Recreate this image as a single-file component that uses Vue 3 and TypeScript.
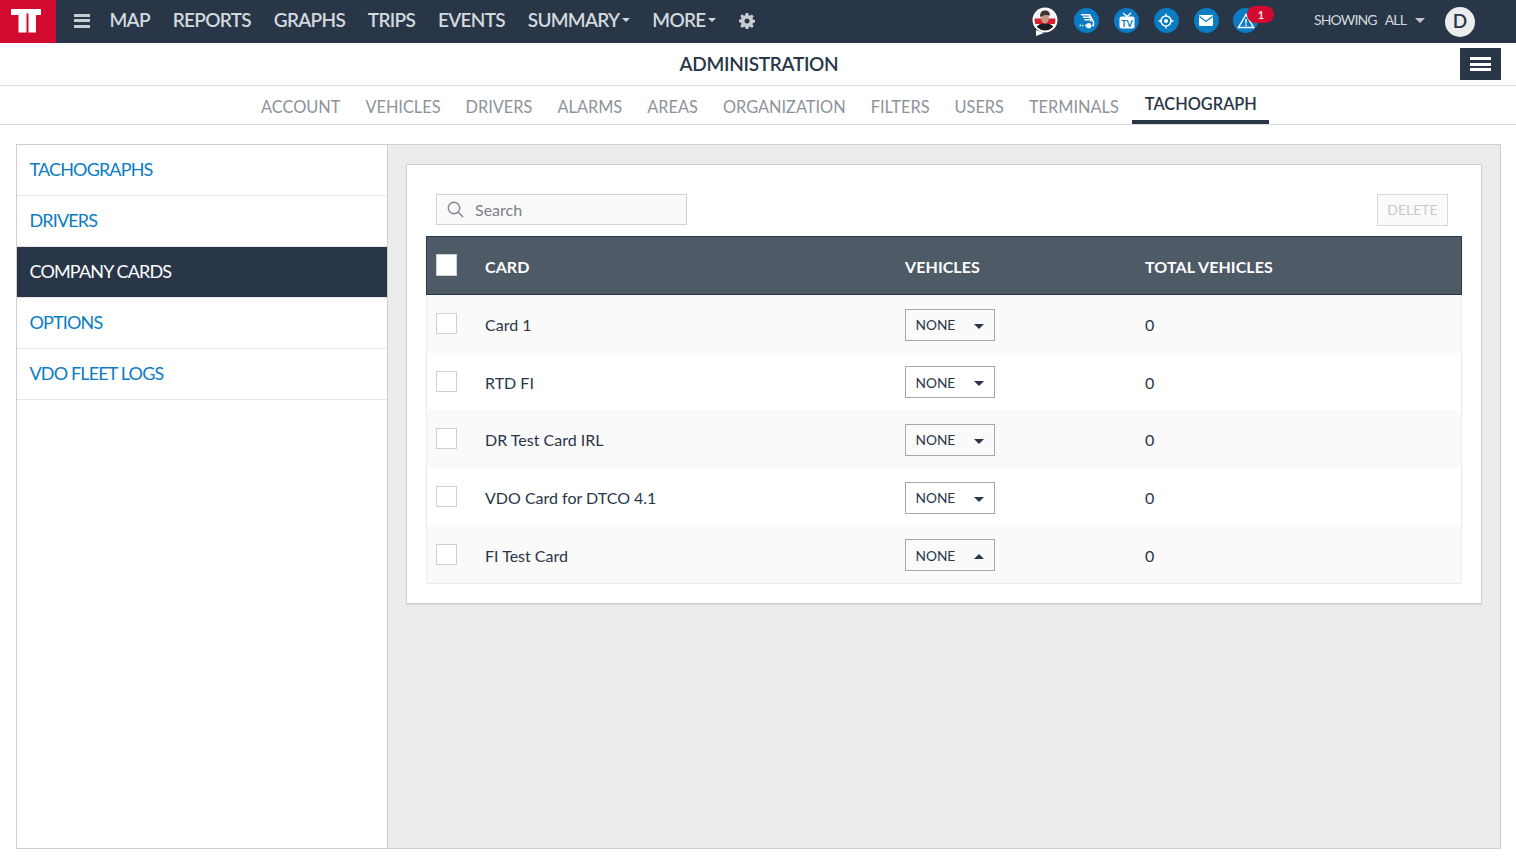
<template>
  <div class="page">
    <nav class="topbar">
      <div class="logo">
        <svg width="30" height="24" viewBox="0 0 30 24"><path d="M0 0h30v6h-5v17.500h-7.500V4.500h-2V23.500H7.500V6H0z" fill="#fff" /></svg>
      </div>
      <div class="burger"><i></i><i></i><i></i></div>
      <ul class="main-menu">
        <li v-for="item in menu" :key="item.label" :class="{ caret: item.caret }">{{ item.label }}</li>
        <li class="gear">
          <svg width="16" height="16" viewBox="0 0 16 16"><path fill="#c9ced4" fill-rule="evenodd" d="M6.700 0h2.600l.4 2.200 1.300.6 1.900-1.300 1.800 1.800-1.300 1.900.6 1.300 2 .4v2.600l-2 .4-.6 1.300 1.300 1.900-1.800 1.800-1.900-1.300-1.300.6-.4 2H6.700l-.4-2-1.300-.6-1.900 1.300-1.800-1.800L2.600 11 2 9.700 0 9.300V6.700l2-.4.600-1.300-1.300-1.900 1.800-1.800L5 2.800l1.300-.6zM8 5.500a2.500 2.500 0 1 0 0 5 2.500 2.500 0 0 0 0-5z" /></svg>
        </li>
      </ul>
      <div class="status-icons">
        <span class="avatar-bubble">
          <svg width="27" height="29" viewBox="0 0 27 29">
            <path d="M4 23l0 6 8-3z" fill="#fff" />
            <circle cx="13" cy="13" r="12.500" fill="#fff" />
            <clipPath id="face"><circle cx="13" cy="13" r="10.500" /></clipPath>
            <g clip-path="url(#face)">
              <rect x="2" y="2" width="22" height="22" fill="#f4f4f4" />
              <rect x="2" y="11.500" width="22" height="5.500" fill="#d8202f" />
              <path d="M3 24c1-6 5-7.500 10-7.500s9 1.500 10 7.500z" fill="#1d1d22" />
              <ellipse cx="13" cy="11" rx="4" ry="5.500" fill="#c99582" />
              <path d="M8 10c0-5 2-6.500 5-6.500s5 1.500 5 5c-3-1-6-1-10 1.500z" fill="#3a3432" />
            </g>
          </svg>
        </span>
        <span class="round">
          <svg width="18" height="18" viewBox="0 0 18 18" fill="none" stroke="#fff" stroke-width="1.400">
            <path d="M3 2.700h8.500L15.500 10v3.500H14M8.500 13.500H7M5 5.200h6.500M6.500 7.700h5M11.500 2.700L13 9.500" />
            <path d="M1.500 13.500h4" stroke-dasharray="1.700 1" />
            <circle cx="10.800" cy="13.700" r="1.900" fill="#fff" />
          </svg>
        </span>
        <span class="round">
          <svg width="18" height="18" viewBox="0 0 18 18">
            <path d="M5 1l4 3.500L13 1" fill="none" stroke="#fff" stroke-width="1.500" />
            <rect x="1.500" y="4.500" width="15" height="12" rx="2" fill="#fff" />
            <text x="9" y="14.500" class="tv-text">TV</text>
          </svg>
        </span>
        <span class="round">
          <svg width="18" height="18" viewBox="0 0 18 18" fill="none" stroke="#fff">
            <circle cx="9" cy="9" r="5" stroke-width="1.600" />
            <circle cx="9" cy="9" r="2" fill="#fff" stroke="none" />
            <path d="M9 1.500v2.500M9 14v2.500M1.500 9H4M14 9h2.500" stroke-width="1.300" />
          </svg>
        </span>
        <span class="round">
          <svg width="14" height="11" viewBox="0 0 14 11">
            <rect width="14" height="11" rx="1" fill="#fff" />
            <path d="M.5 1.500L7 6.500l6.500-5" fill="none" stroke="#0a7cc4" stroke-width="1.200" />
          </svg>
        </span>
        <span class="round alert">
          <svg width="18" height="16" viewBox="0 0 18 16">
            <path d="M9 1.500L1.500 14.500h15z" fill="none" stroke="#fff" stroke-width="1.500" />
            <path d="M9 6v4.500M9 11.500v1.500" stroke="#fff" stroke-width="1.500" />
          </svg>
          <b class="badge">1</b>
        </span>
      </div>
      <div class="showing">
        <span>SHOWING</span><span>ALL</span><i class="down light"></i>
      </div>
      <div class="user">D</div>
    </nav>

    <header class="title-bar">
      <h1>ADMINISTRATION</h1>
      <button class="list-btn"><i></i><i></i><i></i></button>
    </header>

    <div class="tabs">
      <a v-for="tab in tabs" :key="tab" :class="{ active: tab === 'TACHOGRAPH' }">{{ tab }}</a>
    </div>

    <main class="content">
      <aside class="side">
        <a v-for="link in sideLinks" :key="link" :class="{ active: link === 'COMPANY CARDS' }">{{ link }}</a>
      </aside>
      <section class="panel">
        <div class="card">
          <div class="tools">
            <div class="search">
              <svg width="17" height="17" viewBox="0 0 17 17" fill="none" stroke="#7f8790" stroke-width="1.400">
                <circle cx="7" cy="7" r="5.700" />
                <path d="M11 11L16 16" />
              </svg>
              <span>Search</span>
            </div>
            <button class="delete">DELETE</button>
          </div>
          <div class="grid">
            <div class="row head">
              <div class="cell-check"><span class="check"></span></div>
              <div>CARD</div>
              <div>VEHICLES</div>
              <div>TOTAL VEHICLES</div>
            </div>
            <div v-for="(row, i) in rows" :key="row" class="row">
              <div class="cell-check"><span class="check"></span></div>
              <div>{{ row }}</div>
              <div>
                <div class="select">
                  <span>NONE</span>
                  <i class="down" :class="{ up: i === rows.length - 1 }"></i>
                </div>
              </div>
              <div>0</div>
            </div>
          </div>
        </div>
      </section>
    </main>
  </div>
</template>

<script setup lang="ts">
const menu = [
  { label: 'MAP' },
  { label: 'REPORTS' },
  { label: 'GRAPHS' },
  { label: 'TRIPS' },
  { label: 'EVENTS' },
  { label: 'SUMMARY', caret: true },
  { label: 'MORE', caret: true },
];

const tabs = ['ACCOUNT', 'VEHICLES', 'DRIVERS', 'ALARMS', 'AREAS', 'ORGANIZATION', 'FILTERS', 'USERS', 'TERMINALS', 'TACHOGRAPH'];

const sideLinks = ['TACHOGRAPHS', 'DRIVERS', 'COMPANY CARDS', 'OPTIONS', 'VDO FLEET LOGS'];

const rows = ['Card 1', 'RTD FI', 'DR Test Card IRL', 'VDO Card for DTCO 4.1', 'FI Test Card'];
</script>

<style>
body {
  background: #fff;
  overflow: hidden;
}
</style>

<style scoped>
.page {
  height: 860px;
  font-family: Lato, 'Liberation Sans', sans-serif;
  color: #283648;
  display: flex;
  flex-direction: column;
}

.topbar {
  height: 43px;
  background: #283648;
  display: flex;
  align-items: center;
}

.logo {
  width: 56px;
  height: 43px;
  background: #d30a2f;
  display: flex;
  align-items: center;
  justify-content: flex-start;
  padding: 0 0 1px 11px;
  box-sizing: border-box;
}

.burger {
  width: 16px;
  margin: -2px 0 0 18px;
  display: flex;
  flex-direction: column;
  gap: 2.500px;
}

.burger i {
  height: 3px;
  background: #c8cdd2;
}

.main-menu {
  list-style: none;
  margin: -5px 0 0 19.500px;
  padding: 0;
  display: flex;
  align-items: center;
  gap: 22.800px;
  font-size: 19px;
  font-weight: 600;
  letter-spacing: -0.7px;
  color: #d3d9de;
}

.main-menu .caret {
  position: relative;
  padding-right: 10px;
}

.main-menu .caret::after {
  content: '';
  position: absolute;
  right: 0;
  top: 10px;
  border: 4.500px solid transparent;
  border-top-color: #d3d9de;
  border-bottom: 0;
}

.gear {
  display: flex;
  margin: 3px 0 0 1px;
}

.status-icons {
  margin-left: auto;
  align-self: flex-start;
  margin-top: 8px;
  display: flex;
  align-items: flex-start;
  gap: 14.800px;
}

.round {
  width: 25px;
  height: 25px;
  border-radius: 50%;
  background: #0a7cc4;
  display: flex;
  align-items: center;
  justify-content: center;
}

.avatar-bubble {
  display: flex;
  margin-top: -1px;
}

.tv-text {
  font-size: 9px;
  font-weight: 700;
  fill: #0a7cc4;
  text-anchor: middle;
}

.alert {
  position: relative;
}

.badge {
  position: absolute;
  left: 14px;
  top: -2px;
  width: 27px;
  height: 17px;
  border-radius: 9px;
  background: #d30a2f;
  color: #eceef0;
  font-size: 11px;
  font-weight: 700;
  text-align: center;
  line-height: 17px;
}

.showing {
  margin-left: 55.500px;
  margin-top: -4px;
  display: flex;
  align-items: center;
  gap: 8px;
  font-size: 14px;
  letter-spacing: -0.85px;
  color: #d3d9de;
}

.down {
  display: inline-block;
  border: 5.500px solid transparent;
  border-top: 5px solid #283648;
  border-bottom: 0;
  margin-top: 3px;
}

.down.light {
  border-top-color: #c2c6cb;
  margin: 1px 0 0 1px;
}

.down.up {
  border-top: 0;
  border-bottom: 5px solid #283648;
}

.user {
  width: 30px;
  height: 30px;
  margin: 0 41px 0 20px;
  border-radius: 50%;
  background: #ebedef;
  color: #283648;
  font-size: 19px;
  font-weight: 600;
  text-align: center;
  line-height: 28px;
}

.title-bar {
  height: 42px;
  border-bottom: 1px solid #dcdcdc;
  position: relative;
  display: flex;
  align-items: center;
  justify-content: center;
}

.title-bar h1 {
  margin: -2px 0 0 2px;
  font-size: 19px;
  font-weight: 600;
  letter-spacing: -0.3px;
  color: #283648;
}

.list-btn {
  position: absolute;
  right: 15px;
  top: 5px;
  width: 41px;
  height: 32px;
  padding: 0;
  border: 0;
  background: #283648;
  display: flex;
  flex-direction: column;
  align-items: center;
  justify-content: center;
  gap: 2.500px;
}

.list-btn i {
  width: 21px;
  height: 3px;
  background: #fff;
}

.tabs {
  height: 38px;
  border-bottom: 1px solid #dcdcdc;
  display: flex;
  justify-content: flex-start;
  padding-left: 261px;
  gap: 25px;
  font-size: 16.350px;
  color: #8e939b;
}

.tabs a {
  line-height: 41px;
  white-space: nowrap;
}

.tabs a.active {
  margin-left: -12px;
  padding: 0 12px 0 13px;
  height: 38px;
  box-sizing: border-box;
  line-height: 35px;
  color: #283648;
  font-weight: 600;
  border-bottom: 4px solid #283648;
}

.content {
  margin: 19px 15px 11px 16px;
  flex: 1;
  display: flex;
  min-height: 0;
  border: 1px solid #cfcfcf;
}

.side {
  width: 370px;
  background: #fff;
  border-right: 1px solid #cfcfcf;
  flex-shrink: 0;
}

.side a {
  display: block;
  height: 49px;
  padding: 1px 0 0 12.500px;
  border-bottom: 1px solid #e8e8e8;
  line-height: 47px;
  font-size: 18px;
  letter-spacing: -0.85px;
  color: #0a7cc4;
}

.side a.active {
  background: #283648;
  color: #fff;
}

.panel {
  flex: 1;
  background: #ececec;
  padding: 19px 18px 0;
}

.card {
  background: #fff;
  border: 1px solid #cfcfcf;
  box-shadow: 0 1px 1px rgba(0, 0, 0, 0.08);
  padding: 29px 19px 19px;
}

.tools {
  display: flex;
  justify-content: space-between;
  align-items: flex-start;
  padding: 0 14px 0 10px;
  margin-bottom: 10px;
}

.search {
  width: 251px;
  height: 31px;
  box-sizing: border-box;
  background: #fafafa;
  border: 1px solid #d2d2d2;
  display: flex;
  align-items: center;
  gap: 11px;
  padding-left: 10px;
  font-size: 16px;
  color: #7a8088;
}

.delete {
  width: 71px;
  height: 32px;
  border: 1px solid #d8d8d8;
  background: #fafafa;
  color: #c9c9c9;
  font-family: inherit;
  font-size: 14px;
  padding: 0 0 2px;
}

.grid {
  border: 1px solid #ececec;
  border-top: 0;
}

.row {
  display: grid;
  grid-template-columns: 58px 420px 240px 1fr;
  align-items: center;
  height: 57.600px;
  box-sizing: border-box;
  padding-top: 2px;
  font-size: 16px;
  color: #283648;
}

.row:nth-child(even) {
  background: #fafafa;
}

.row.head {
  height: 59px;
  margin: 0 -1px;
  background: #4e5a66;
  border: 1px solid #283648;
  color: #fff;
  font-weight: 700;
  letter-spacing: 0.08px;
}

.cell-check {
  padding-left: 9px;
  display: flex;
}

.check {
  width: 21px;
  height: 21px;
  box-sizing: border-box;
  background: #fff;
  border: 1px solid #cfcfcf;
  margin-top: -2px;
}

.head .check {
  height: 22px;
  margin-top: -3px;
}

.select {
  width: 90px;
  height: 32px;
  box-sizing: border-box;
  border: 1px solid #a3a8b0;
  display: flex;
  align-items: center;
  justify-content: space-between;
  padding: 0 10px 0 9.500px;
  font-size: 13.700px;
}
</style>
